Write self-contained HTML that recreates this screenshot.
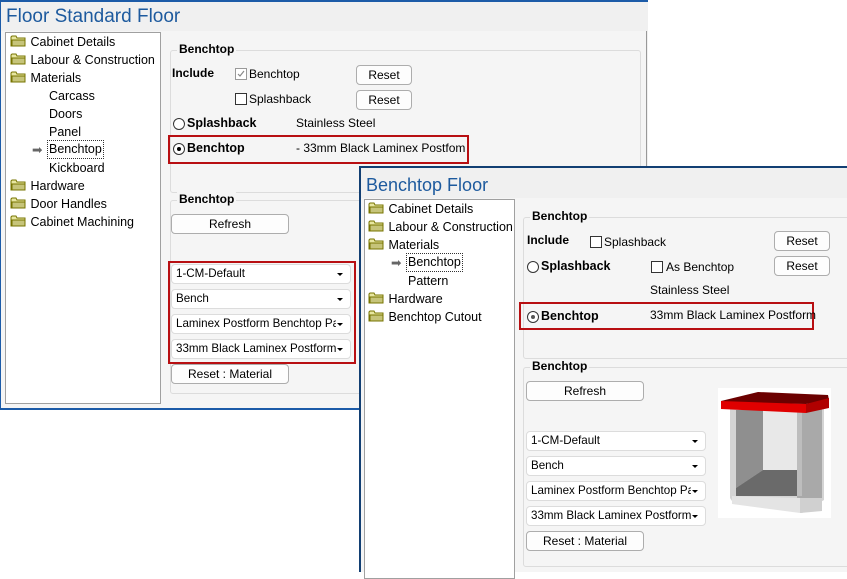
<!DOCTYPE html>
<html><head><style>
*{margin:0;padding:0;box-sizing:border-box}
body{width:847px;height:572px;position:relative;overflow:hidden;background:#fff;font-family:"Liberation Sans",sans-serif;font-size:12px;color:#000}
.a{position:absolute;white-space:nowrap}
.tree{position:absolute;background:#fff;border:1px solid #a0a0a0;font-size:12.5px}
.ti{position:absolute;white-space:nowrap;height:18px;line-height:18px}
.grp{position:absolute;border:1px solid #dcdcdc;border-radius:3px}
.gl{position:absolute;top:-9px;left:6px;background:#f5f5f5;padding:0 2px;font-weight:bold;font-size:12px}
.btn{position:absolute;border:1px solid #adadad;border-radius:4px;background:#fdfdfd;text-align:center;line-height:18px;height:20px;font-size:12px}
.dd{position:absolute;border:1px solid #dcdcdc;border-radius:4px;background:#fff;height:20px;line-height:18px;font-size:11.6px}
.dd span{position:absolute;left:4px;top:0;right:14px;overflow:hidden;white-space:nowrap}
.dd:after{content:"";position:absolute;right:7px;top:8px;border-left:3px solid transparent;border-right:3px solid transparent;border-top:3px solid #000}
.cb{position:absolute;width:12px;height:12px;border:1px solid #333;background:#fff}
.rd{position:absolute;width:12px;height:12px;border:1px solid #333;border-radius:50%;background:#fff}
.red{position:absolute;border:2px solid #b80f12}
</style></head><body>
<svg width="0" height="0" style="position:absolute"><defs><g id="f"><path d="M1 3 L1 12 L15 12 L15 4 L7 4 L6 2 L2 2 Z" fill="#e7e6a0" stroke="#777400"/><path d="M2 6 L15 6 L15 12 L2 12 Z" fill="#c6c47a" stroke="#777400"/></g></defs></svg>

<!-- Window 1 -->
<div class="a" style="left:0;top:0;width:648px;height:410px;border-top:2px solid #1c5ba8;border-left:1px solid #1c5ba8;border-bottom:2px solid #1c5ba8;background:#f0f0f0"></div>
<div class="a" style="left:1px;top:31px;width:646px;height:377px;background:#f5f5f5"></div>
<div class="a" style="left:646px;top:31px;width:1px;height:377px;background:#999"></div>
<div class="a" style="left:6px;top:6px;font-size:19px;color:#1d5a9e">Floor Standard Floor</div>
<div class="tree" style="left:5px;top:32px;width:156px;height:372px">
 <div class="ti" style="left:4px;top:0"><svg width="17" height="14" style="vertical-align:-2px"><use href="#f"/></svg> Cabinet Details</div>
 <div class="ti" style="left:4px;top:18px"><svg width="17" height="14" style="vertical-align:-2px"><use href="#f"/></svg> Labour &amp; Construction</div>
 <div class="ti" style="left:4px;top:36px"><svg width="17" height="14" style="vertical-align:-2px"><use href="#f"/></svg> Materials</div>
 <div class="ti" style="left:43px;top:54px">Carcass</div>
 <div class="ti" style="left:43px;top:72px">Doors</div>
 <div class="ti" style="left:43px;top:90px">Panel</div>
 <div class="ti" style="left:26px;top:108px;color:#666">➡</div>
 <div class="ti" style="left:42px;top:108px;outline:1px dotted #333;padding:0 1px;height:17px;line-height:17px">Benchtop</div>
 <div class="ti" style="left:43px;top:126px">Kickboard</div>
 <div class="ti" style="left:4px;top:144px"><svg width="17" height="14" style="vertical-align:-2px"><use href="#f"/></svg> Hardware</div>
 <div class="ti" style="left:4px;top:162px"><svg width="17" height="14" style="vertical-align:-2px"><use href="#f"/></svg> Door Handles</div>
 <div class="ti" style="left:4px;top:180px"><svg width="17" height="14" style="vertical-align:-2px"><use href="#f"/></svg> Cabinet Machining</div>
</div>
<div class="grp" style="left:170px;top:50px;width:471px;height:143px"><div class="gl">Benchtop</div></div>
<div class="a" style="left:172px;top:66px;font-weight:bold">Include</div>
<div class="cb" style="left:235px;top:68px;border-color:#999"><svg width="10" height="10" style="position:absolute;left:0;top:0"><path d="M2 5 L4 7 L8 2" stroke="#888" fill="none" stroke-width="1.2"/></svg></div>
<div class="a" style="left:249px;top:67px">Benchtop</div>
<div class="cb" style="left:235px;top:93px"></div>
<div class="a" style="left:249px;top:92px">Splashback</div>
<div class="btn" style="left:356px;top:65px;width:56px">Reset</div>
<div class="btn" style="left:356px;top:90px;width:56px">Reset</div>
<div class="rd" style="left:173px;top:118px"></div>
<div class="a" style="left:187px;top:116px;font-weight:bold;font-size:12.5px">Splashback</div>
<div class="a" style="left:296px;top:116px">Stainless Steel</div>
<div class="red" style="left:168px;top:135px;width:301px;height:29px"></div>
<div class="rd" style="left:173px;top:143px"><div style="position:absolute;left:3px;top:3px;width:4px;height:4px;background:#000;border-radius:50%"></div></div>
<div class="a" style="left:187px;top:141px;font-weight:bold;font-size:12.5px">Benchtop</div>
<div class="a" style="left:296px;top:141px">- 33mm Black Laminex Postfom</div>
<div class="grp" style="left:170px;top:200px;width:471px;height:194px"><div class="gl">Benchtop</div></div>
<div class="btn" style="left:171px;top:214px;width:118px">Refresh</div>
<div class="red" style="left:168px;top:261px;width:188px;height:103px"></div>
<div class="dd" style="left:171px;top:264px;width:180px"><span>1-CM-Default</span></div>
<div class="dd" style="left:171px;top:289px;width:180px"><span>Bench</span></div>
<div class="dd" style="left:171px;top:314px;width:180px"><span>Laminex Postform Benchtop Pattern</span></div>
<div class="dd" style="left:171px;top:339px;width:180px"><span>33mm Black Laminex Postform</span></div>
<div class="btn" style="left:171px;top:364px;width:118px">Reset : Material</div>

<!-- Window 2 -->
<div class="a" style="left:359px;top:166px;width:488px;height:406px;background:#f0f0f0;border-top:2px solid #123f73;border-left:2px solid #123f73"></div>
<div class="a" style="left:361px;top:198px;width:486px;height:374px;background:#f5f5f5"></div>
<div class="a" style="left:366px;top:175px;font-size:18px;color:#1d5a9e">Benchtop Floor</div>
<div class="tree" style="left:364px;top:199px;width:151px;height:380px">
 <div class="ti" style="left:3px;top:0"><svg width="17" height="14" style="vertical-align:-2px"><use href="#f"/></svg> Cabinet Details</div>
 <div class="ti" style="left:3px;top:18px"><svg width="17" height="14" style="vertical-align:-2px"><use href="#f"/></svg> Labour &amp; Construction</div>
 <div class="ti" style="left:3px;top:36px"><svg width="17" height="14" style="vertical-align:-2px"><use href="#f"/></svg> Materials</div>
 <div class="ti" style="left:26px;top:54px;color:#666">➡</div>
 <div class="ti" style="left:42px;top:54px;outline:1px dotted #333;padding:0 1px;height:17px;line-height:17px">Benchtop</div>
 <div class="ti" style="left:43px;top:72px">Pattern</div>
 <div class="ti" style="left:3px;top:90px"><svg width="17" height="14" style="vertical-align:-2px"><use href="#f"/></svg> Hardware</div>
 <div class="ti" style="left:3px;top:108px"><svg width="17" height="14" style="vertical-align:-2px"><use href="#f"/></svg> Benchtop Cutout</div>
</div>
<div class="grp" style="left:523px;top:217px;width:340px;height:142px"><div class="gl">Benchtop</div></div>
<div class="a" style="left:527px;top:233px;font-weight:bold">Include</div>
<div class="cb" style="left:590px;top:236px"></div>
<div class="a" style="left:604px;top:235px">Splashback</div>
<div class="btn" style="left:774px;top:231px;width:56px">Reset</div>
<div class="rd" style="left:527px;top:261px"></div>
<div class="a" style="left:541px;top:259px;font-weight:bold;font-size:12.5px">Splashback</div>
<div class="cb" style="left:651px;top:261px"></div>
<div class="a" style="left:666px;top:260px">As Benchtop</div>
<div class="btn" style="left:774px;top:256px;width:56px">Reset</div>
<div class="a" style="left:650px;top:283px">Stainless Steel</div>
<div class="red" style="left:519px;top:302px;width:295px;height:28px"></div>
<div class="rd" style="left:527px;top:311px"><div style="position:absolute;left:3px;top:3px;width:4px;height:4px;background:#555;border-radius:50%"></div></div>
<div class="a" style="left:541px;top:309px;font-weight:bold;font-size:12.5px">Benchtop</div>
<div class="a" style="left:650px;top:308px">33mm Black Laminex Postform</div>
<div class="grp" style="left:523px;top:367px;width:340px;height:200px"><div class="gl">Benchtop</div></div>
<div class="btn" style="left:526px;top:381px;width:118px">Refresh</div>
<div class="dd" style="left:526px;top:431px;width:180px"><span>1-CM-Default</span></div>
<div class="dd" style="left:526px;top:456px;width:180px"><span>Bench</span></div>
<div class="dd" style="left:526px;top:481px;width:180px"><span>Laminex Postform Benchtop Pattern</span></div>
<div class="dd" style="left:526px;top:506px;width:180px"><span>33mm Black Laminex Postform</span></div>
<div class="btn" style="left:526px;top:531px;width:118px">Reset : Material</div>
<svg class="a" style="left:718px;top:388px" width="113" height="130" viewBox="0 0 113 130">
<rect width="113" height="130" fill="#fff"/>
<polygon points="12,20 106,20 106,112 84,125 14,113 12,110" fill="#d4d4d4"/>
<polygon points="18,22 45,22 45,82 18,100" fill="#8f8f8f"/>
<polygon points="45,22 79,22 79,82 45,82" fill="#e8e8e8"/>
<polygon points="79,22 104,20 104,110 79,110" fill="#a9a9a9"/>
<polygon points="79,22 84,22 84,108 79,108" fill="#bdbdbd"/>
<polygon points="18,100 45,82 79,82 79,108 18,108" fill="#6a6a6a"/>
<polygon points="14,108 82,110 82,125 14,116" fill="#e4e4e4"/>
<polygon points="82,110 104,110 104,123 82,125" fill="#d0d0d0"/>
<polygon points="3,13 40,4 110,7 111,12 88,16 3,15" fill="#6b0000"/>
<polygon points="3,13 88,16 88,25 3,21" fill="#e00000"/>
<polygon points="88,16 111,10 111,20 88,25" fill="#b00000"/>
</svg>
</body></html>
